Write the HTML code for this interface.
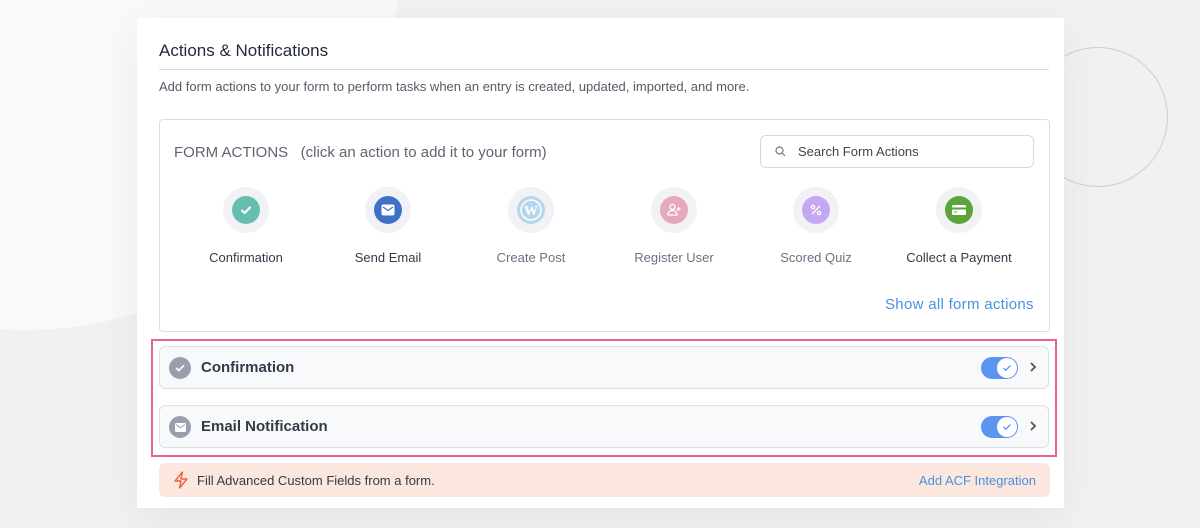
<!DOCTYPE html>
<html><head><meta charset="utf-8"><style>
*{box-sizing:border-box;margin:0;padding:0}
body{width:1200px;height:528px;overflow:hidden;background:#f1f1f3;font-family:"Liberation Sans",sans-serif;position:relative}
.bgc{position:absolute;left:-350px;top:-420px;width:750px;height:750px;border-radius:50%;background:#f9f9fa}
.ring{position:absolute;left:1028px;top:47px;width:140px;height:140px;border-radius:50%;border:1px solid #cfcfd3}
.card{position:absolute;left:137px;top:18px;width:927px;height:490px;background:#fff;box-shadow:0 10px 40px rgba(0,0,0,.06)}
.abs{position:absolute}
.t{color:#1f2937}
.ic{position:absolute;width:46px;height:46px;border-radius:50%;background:#f1f2f6;top:187px}
.ic .in{position:absolute;left:9px;top:9px;width:28px;height:28px;border-radius:50%;display:flex;align-items:center;justify-content:center}
.lbl{position:absolute;top:250px;font-size:13px;width:140px;text-align:center}
.row{position:absolute;left:159px;width:890px;height:43px;background:#f8f9fb;border:1px solid #dcdfe6;border-radius:6px}
.row .g{position:absolute;left:9px;top:10px;width:22px;height:22px;border-radius:50%;background:#9aa0ab;display:flex;align-items:center;justify-content:center}
.row .n{position:absolute;left:41px;top:12px;font-size:15px;font-weight:bold;color:#333b48}
.tg{position:absolute;left:821px;top:10px;width:37px;height:22px;border-radius:11px;background:#5b95f0}
.tg i{position:absolute;right:1px;top:1px;width:20px;height:20px;border-radius:50%;background:#fff;display:flex;align-items:center;justify-content:center}
.chev{position:absolute;left:869px;top:14px}
</style></head><body>
<div class="bgc"></div>
<div class="ring"></div>
<div class="card"></div>
<div class="abs t" style="left:159px;top:41px;font-size:17px">Actions &amp; Notifications</div>
<div class="abs" style="left:159px;top:69px;width:890px;height:1px;background:#d8d8dc"></div>
<div class="abs" style="left:159px;top:79px;font-size:13px;color:#555b66">Add form actions to your form to perform tasks when an entry is created, updated, imported, and more.</div>
<div class="abs" style="left:159px;top:119px;width:891px;height:213px;border:1px solid #dcdde1;border-radius:4px"></div>
<div class="abs" style="left:174px;top:144px;font-size:15px;color:#5f6570">FORM ACTIONS&nbsp;&nbsp; (click an action to add it to your form)</div>
<div class="abs" style="left:760px;top:135px;width:274px;height:33px;border:1px solid #d6d8dd;border-radius:6px">
<svg class="abs" style="left:14px;top:10px" width="11" height="11" viewBox="0 0 11 11"><circle cx="4.5" cy="4.5" r="3.5" fill="none" stroke="#777" stroke-width="1.2"/><path d="M7 7l3 3" stroke="#777" stroke-width="1.2"/></svg>
<span class="abs" style="left:37px;top:8px;font-size:13px;color:#444">Search Form Actions</span></div>

<div class="ic" style="left:223px"><div class="in" style="background:#66bfae"><svg width="14" height="14" viewBox="0 0 14 14"><path d="M3 7.5l2.7 2.5L11 4.5" fill="none" stroke="#fff" stroke-width="2" stroke-linecap="round" stroke-linejoin="round"/></svg></div></div>
<div class="ic" style="left:365px"><div class="in" style="background:#3f72c6"><svg width="16" height="14" viewBox="0 0 16 14"><rect x="1.5" y="1.5" width="13" height="11" rx="2" fill="#fff"/><path d="M3 4l5 3.5L13 4" fill="none" stroke="#3f72c6" stroke-width="1.3"/></svg></div></div>
<div class="ic" style="left:508px"><div class="in" style="background:#b7d5eb"><svg width="24" height="24" viewBox="0 0 24 24"><circle cx="12" cy="12" r="10" fill="none" stroke="#fff" stroke-width="1.5"/><text x="12" y="17" font-family="Liberation Serif" font-size="14" font-weight="bold" fill="#fff" text-anchor="middle">W</text></svg></div></div>
<div class="ic" style="left:651px"><div class="in" style="background:#e6a8bd"><svg width="16" height="16" viewBox="0 0 16 16"><circle cx="6.5" cy="5" r="2.5" fill="none" stroke="#fff" stroke-width="1.3"/><path d="M2 13c0-3 2-4.5 4.5-4.5S11 10 11 13z" fill="none" stroke="#fff" stroke-width="1.3"/><path d="M12.5 5v4M10.5 7h4" stroke="#fff" stroke-width="1.2"/></svg></div></div>
<div class="ic" style="left:793px"><div class="in" style="background:#c5a6f0"><svg width="14" height="14" viewBox="0 0 14 14"><circle cx="4" cy="4" r="1.6" fill="none" stroke="#fff" stroke-width="1.3"/><circle cx="10" cy="10" r="1.6" fill="none" stroke="#fff" stroke-width="1.3"/><path d="M11 3L3 11" stroke="#fff" stroke-width="1.4"/></svg></div></div>
<div class="ic" style="left:936px"><div class="in" style="background:#5ba53b"><svg width="16" height="12" viewBox="0 0 16 12"><rect x="1" y="1" width="14" height="10" rx="1.5" fill="#fff"/><rect x="1" y="3.5" width="14" height="2" fill="#5ba53b"/><rect x="3" y="7.5" width="3" height="1" fill="#5ba53b"/></svg></div></div>

<div class="lbl" style="left:176px;color:#333b48">Confirmation</div>
<div class="lbl" style="left:318px;color:#333b48">Send Email</div>
<div class="lbl" style="left:461px;color:#6b7280">Create Post</div>
<div class="lbl" style="left:604px;color:#6b7280">Register User</div>
<div class="lbl" style="left:746px;color:#6b7280">Scored Quiz</div>
<div class="lbl" style="left:889px;color:#333b48">Collect a Payment</div>
<div class="abs" style="left:885px;top:296px;font-size:15px;color:#4a90e2;letter-spacing:0.3px">Show all form actions</div>

<div class="abs" style="left:151px;top:339px;width:906px;height:118px;border:2px solid #e8638f"></div>
<div class="row" style="top:346px"><div class="g"><svg width="12" height="12" viewBox="0 0 12 12"><path d="M2.5 6.3l2.3 2.2L9.5 3.8" fill="none" stroke="#fff" stroke-width="1.6" stroke-linecap="round"/></svg></div><div class="n">Confirmation</div><div class="tg"><i><svg width="10" height="8" viewBox="0 0 10 8"><path d="M1.5 4l2.3 2.2L8.5 1.5" fill="none" stroke="#5b95f0" stroke-width="1.3"/></svg></i></div><svg class="chev" width="8" height="12" viewBox="0 0 8 12"><path d="M2 2l4 4-4 4" fill="none" stroke="#555" stroke-width="1.8"/></svg></div>
<div class="row" style="top:405px"><div class="g"><svg width="13" height="11" viewBox="0 0 13 11"><rect x="1" y="1" width="11" height="9" rx="1.5" fill="#fff"/><path d="M2 2.5l4.5 3.3L11 2.5" fill="none" stroke="#9aa0ab" stroke-width="1"/></svg></div><div class="n">Email Notification</div><div class="tg"><i><svg width="10" height="8" viewBox="0 0 10 8"><path d="M1.5 4l2.3 2.2L8.5 1.5" fill="none" stroke="#5b95f0" stroke-width="1.3"/></svg></i></div><svg class="chev" width="8" height="12" viewBox="0 0 8 12"><path d="M2 2l4 4-4 4" fill="none" stroke="#555" stroke-width="1.8"/></svg></div>

<div class="abs" style="left:159px;top:463px;width:891px;height:34px;background:#fbe7de;border-radius:6px">
<svg class="abs" style="left:14px;top:8px" width="16" height="18" viewBox="0 0 16 18"><path d="M9.5 1L2 10h6l-1.5 7L14 8H8z" fill="none" stroke="#e8633a" stroke-width="1.4" stroke-linejoin="round"/></svg>
<span class="abs" style="left:38px;top:10px;font-size:13px;color:#333b48">Fill Advanced Custom Fields from a form.</span>
<span class="abs" style="right:14px;top:10px;font-size:13px;color:#4a90e2">Add ACF Integration</span></div>
</body></html>
